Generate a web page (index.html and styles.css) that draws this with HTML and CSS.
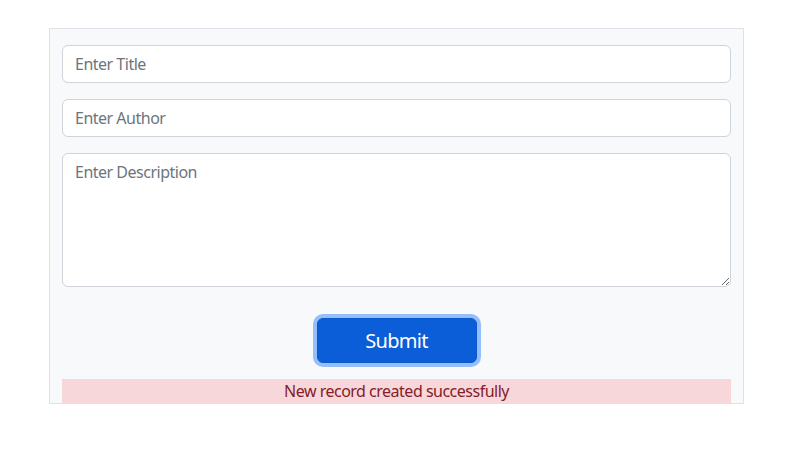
FILE: index.html
```html
<!DOCTYPE html>
<html lang="en">
<head>
<meta charset="utf-8">
<title>Create Record</title>
<link rel="stylesheet" href="styles.css">
</head>
<body>
<div class="page">
  <form class="panel">
    <input class="field" type="text" placeholder="Enter Title">
    <input class="field" type="text" placeholder="Enter Author">
    <textarea class="field area" rows="5" placeholder="Enter Description"></textarea>
    <div class="actions">
      <button type="button" class="btn">Submit</button>
    </div>
    <div class="alert">New record created successfully</div>
  </form>
</div>
</body>
</html>
```

FILE: styles.css
```css
* { box-sizing: border-box; }
html, body { margin: 0; background: #ffffff; }
body {
  font-family: "Segoe UI", "Noto Sans", "Open Sans", sans-serif;
  font-size: 16px;
  letter-spacing: -0.5px;
  color: #212529;
}
.page {
  padding: 28px 0 0 49px;
}
.panel {
  width: 695px;
  margin: 0;
  background: #f8f9fa;
  border: 1px solid #dee2e6;
  padding: 16px 12px 0 12px;
  display: flex;
  flex-direction: column;
}
.field {
  display: block;
  width: 100%;
  height: 38px;
  margin: 0 0 16px 0;
  padding: 6px 12px;
  font-family: inherit;
  font-size: 16px;
  letter-spacing: -0.5px;
  line-height: 24px;
  color: #212529;
  background: #ffffff;
  border: 1px solid #ced4da;
  border-radius: 6px;
  outline: none;
}
.field::placeholder { color: #6c757d; opacity: 1; }
.area {
  height: 134px;
  margin-bottom: 0;
  resize: vertical;
}
.actions {
  display: flex;
  justify-content: center;
  padding: 31px 0 16px 0;
}
.btn {
  width: 160px;
  height: 45px;
  padding: 0 16px;
  font-family: inherit;
  font-size: 20px;
  letter-spacing: -0.7px;
  color: #ffffff;
  background: #0b5ed7;
  border: 1px solid #0a58ca;
  border-radius: 6px;
  box-shadow: 0 0 0 4px rgba(49, 132, 253, 0.5);
  cursor: pointer;
}
.alert {
  height: 24px;
  line-height: 24px;
  text-align: center;
  background: #f8d7da;
  color: #842029;
  font-size: 16px;
}
```
